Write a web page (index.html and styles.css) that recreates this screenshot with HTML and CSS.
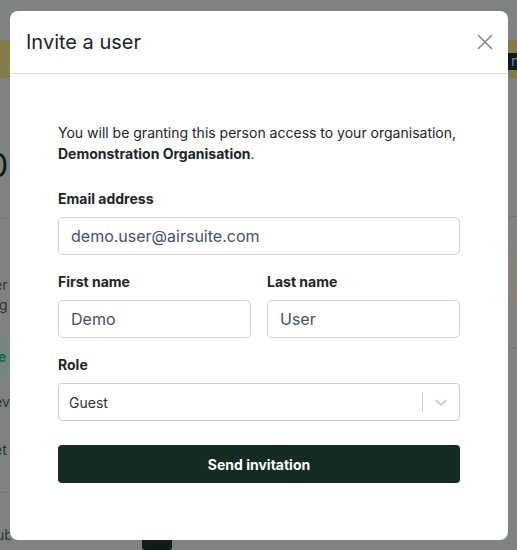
FILE: index.html
```html
<!DOCTYPE html>
<html lang="en">
<head>
<meta charset="utf-8">
<title>Invite a user</title>
<link rel="stylesheet" href="styles.css">
</head>
<body>
<div class="page">
  <div class="banner"><span class="banner-btn">n</span></div>
  <div class="page-rows">
    <div class="big">0</div>
    <div class="rule rule-a"></div>
    <div class="txt t1">er</div>
    <div class="txt t2">rg</div>
    <div class="hl"><span class="txt teal">e</span></div>
    <div class="txt t3">ev</div>
    <div class="txt t4">et</div>
    <div class="rule rule-b"></div>
    <div class="txt t5">ub</div>
  </div>
  <div class="tan"></div>
  <div class="rline r1"></div>
  <div class="rline r2"></div>
  <div class="bottom-btn"></div>
</div>

<div class="modal" role="dialog">
  <div class="modal-header">
    <h2 class="modal-title">Invite a user</h2>
    <button class="close" aria-label="Close">
      <svg width="16" height="16" viewBox="0 0 16 16"><path d="M1 1L15 15M15 1L1 15" stroke="#8a8a8a" stroke-width="1.6" fill="none"/></svg>
    </button>
  </div>
  <div class="modal-body">
    <p class="intro">You will be granting this person access to your organisation, <strong>Demonstration Organisation</strong>.</p>
    <div class="field">
      <label class="label">Email address</label>
      <div class="input">demo.user@airsuite.com</div>
    </div>
    <div class="row">
      <div class="field">
        <label class="label">First name</label>
        <div class="input">Demo</div>
      </div>
      <div class="field">
        <label class="label">Last name</label>
        <div class="input">User</div>
      </div>
    </div>
    <div class="field">
      <label class="label">Role</label>
      <div class="select">
        <span class="select-value">Guest</span>
        <span class="sep"></span>
        <span class="chev"><svg width="20" height="20" viewBox="0 0 20 20"><path d="M4.5 8l5.5 5 5.5-5" stroke="#cccccc" stroke-width="1.8" fill="none"/></svg></span>
      </div>
    </div>
    <button class="submit">Send invitation</button>
  </div>
</div>
</body>
</html>
```

FILE: styles.css
```css
html, body {
  margin: 0;
  padding: 0;
}
body {
  width: 517px;
  height: 550px;
  overflow: hidden;
  background: #7e8381;
  font-family: Inter, "Noto Sans", sans-serif;
  position: relative;
}
.page {
  position: absolute;
  inset: 0;
}
.banner {
  margin-top: 40px;
  height: 38px;
  background: #847c4c;
  display: flex;
  justify-content: flex-end;
  align-items: center;
}
.banner-btn {
  background: #0e1a17;
  color: #8a8f8d;
  height: 17px;
  width: 22px;
  margin-right: -2px;
  margin-top: 4px;
  font-size: 13px;
  line-height: 17px;
  padding-left: 4px;
  border-radius: 4px 0 0 4px;
  box-sizing: border-box;
  text-align: right;
}
.page-rows {
  position: absolute;
  left: 0;
  top: 78px;
  width: 10px;
  height: 472px;
  overflow: hidden;
}
.big {
  position: absolute;
  top: 68px;
  left: -12px;
  font-size: 32px;
  line-height: 40px;
  color: #0d1a17;
}
.rule {
  position: absolute;
  left: 0;
  width: 10px;
  height: 1px;
  background: #747977;
}
.rule-a { top: 140px; }
.rule-b { top: 414px; }
.txt {
  position: absolute;
  font-size: 14px;
  line-height: 20px;
  color: #2e3431;
  left: -6px;
}
.t1 { top: 197px; }
.t2 { top: 217px; }
.t3 { top: 314px; }
.t4 { top: 362px; }
.t5 { top: 447px; left: -4px; }
.hl {
  position: absolute;
  top: 262px;
  left: 0;
  width: 10px;
  height: 35px;
  background: #74877f;
}
.teal {
  color: #1b5c4c;
  font-weight: 600;
  top: 7px;
  left: -2px;
}
.tan {
  position: absolute;
  right: 0;
  top: 247px;
  width: 10px;
  height: 54px;
  background: #858078;
}
.rline {
  position: absolute;
  right: 0;
  width: 10px;
  height: 1px;
  background: #747977;
}
.r1 { top: 216px; }
.r2 { top: 348px; }
.bottom-btn {
  position: absolute;
  left: 142px;
  top: 538px;
  width: 30px;
  height: 12px;
  background: #0f1b18;
  border-radius: 3px;
}

.modal {
  position: absolute;
  left: 10px;
  top: 11px;
  width: 498px;
  height: 529px;
  background: #ffffff;
  border-radius: 8px;
  box-sizing: border-box;
}
.modal-header {
  height: 63px;
  box-sizing: border-box;
  border-bottom: 1px solid #dcdcdc;
  display: flex;
  align-items: center;
  justify-content: space-between;
  padding: 0 16px;
}
.modal-title {
  margin: 0;
  font-size: 20px;
  font-weight: 400;
  color: #212529;
  line-height: 24px;
}
.close {
  background: none;
  border: 0;
  padding: 0;
  width: 16px;
  height: 16px;
  display: flex;
  margin-right: -1px;
}
.modal-body {
  padding: 48px 48px 57px;
  display: flex;
  flex-direction: column;
  gap: 16px;
}
.intro {
  margin: 0 0 8px;
  font-size: 14px;
  line-height: 21px;
  color: #212529;
}
.intro strong {
  font-weight: 700;
}
.field {
  display: flex;
  flex-direction: column;
  gap: 8px;
  flex: 1;
}
.label {
  font-size: 14px;
  line-height: 21px;
  font-weight: 700;
  color: #212529;
}
.row {
  display: flex;
  gap: 16px;
}
.input {
  height: 38px;
  box-sizing: border-box;
  border: 1px solid #cfd2d8;
  border-radius: 5px;
  padding: 0 12px;
  font-size: 16px;
  color: #46506a;
  display: flex;
  align-items: center;
}
.select {
  height: 38px;
  box-sizing: border-box;
  border: 1px solid #cccccc;
  border-radius: 4px;
  display: flex;
  align-items: center;
  padding-left: 10px;
}
.select-value {
  flex: 1;
  font-size: 14px;
  color: #333333;
}
.sep {
  width: 1px;
  height: 20px;
  background: #cccccc;
}
.chev {
  display: flex;
  padding: 0 8px;
}
.submit {
  margin-top: 8px;
  height: 38px;
  border: 0;
  border-radius: 4px;
  background: #142a25;
  color: #ffffff;
  font-family: inherit;
  font-size: 14px;
  font-weight: 700;
}
```
